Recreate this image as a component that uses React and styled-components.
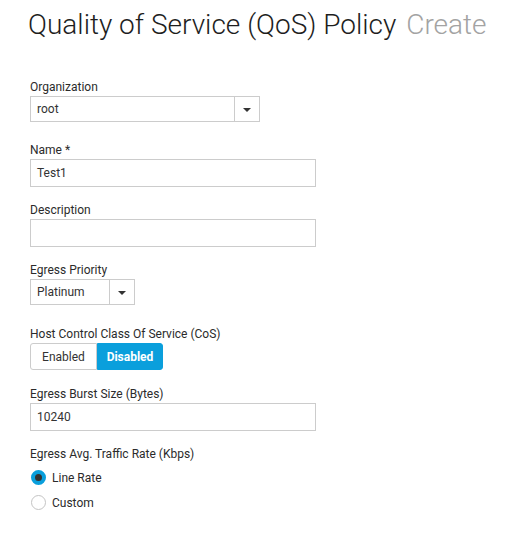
import React from "react";
import styled, { createGlobalStyle } from "styled-components";

const Global = createGlobalStyle`
  html, body { margin: 0; padding: 0; background: #fff; }
  body { font-family: Roboto, "Liberation Sans", Arial, sans-serif; color: #333; }
  * { box-sizing: border-box; }
`;

const Page = styled.div`
  width: 518px;
  height: 543px;
  padding: 8px 0 0 30px;
`;

const Title = styled.h1`
  margin: 0 0 0 -2px;
  font-weight: 300;
  font-size: 28px;
  line-height: 33px;
  color: #1e1e1e;
  white-space: nowrap;
`;

const Muted = styled.span`
  color: #a3a3a3;
  margin-left: 3px;
`;

const Form = styled.form`
  margin-top: 37px;
  display: flex;
  flex-direction: column;
`;

const Field = styled.div`
  display: flex;
  flex-direction: column;
  align-items: flex-start;
  margin-bottom: ${(p) => p.$mb ?? 14}px;
`;

const Label = styled.label`
  display: block;
  font-size: 12px;
  line-height: 17px;
  padding-top: 1px;
  color: #2b2b2b;
  margin-bottom: ${(p) => p.$gap ?? 0}px;
`;

const TextBox = styled.div`
  width: ${(p) => p.$w}px;
  height: ${(p) => p.$h ?? 28}px;
  border: 1px solid #cccccc;
  background: #fff;
  font-size: 12px;
  color: #333;
  padding: 0 6px;
  display: flex;
  align-items: center;
`;

const Select = styled.div`
  width: ${(p) => p.$w}px;
  height: 26px;
  border: 1px solid #cccccc;
  background: #fff;
  display: flex;
  font-size: 12px;
  color: #333;
`;

const SelectValue = styled.div`
  flex: 1;
  display: flex;
  align-items: center;
  padding: 0 6px;
`;

const SelectArrow = styled.div`
  width: 25px;
  border-left: 1px solid #cccccc;
  display: flex;
  align-items: center;
  justify-content: center;
  &::after {
    content: "";
    width: 0;
    height: 0;
    border-left: 4px solid transparent;
    border-right: 4px solid transparent;
    border-top: 4px solid #333;
    margin-top: 1px;
  }
`;

const Toggle = styled.div`
  display: flex;
  height: 27px;
`;

const ToggleBtn = styled.div`
  width: ${(p) => p.$w}px;
  display: flex;
  align-items: center;
  justify-content: center;
  font-size: 12px;
  font-weight: ${(p) => (p.$active ? 700 : 400)};
  color: ${(p) => (p.$active ? "#fff" : "#333")};
  background: ${(p) => (p.$active ? "#0a9fdc" : "#fff")};
  border: 1px solid ${(p) => (p.$active ? "#0a9fdc" : "#cccccc")};
  border-radius: ${(p) => (p.$first ? "3px 0 0 3px" : "0 3px 3px 0")};
`;

const RadioGroup = styled.div`
  display: flex;
  flex-direction: column;
  margin-top: 2px;
`;

const RadioRow = styled.div`
  height: 25px;
  display: flex;
  align-items: center;
  font-size: 12px;
  color: #2b2b2b;
`;

const RadioCircle = styled.span`
  width: 15px;
  height: 15px;
  margin-left: 1px;
  margin-right: 6px;
  border-radius: 50%;
  border: ${(p) => (p.$checked ? "4px solid #0a9fdc" : "1px solid #c4c4c4")};
  background: ${(p) => (p.$checked ? "#333" : "#fff")};
  flex: none;
`;

export default function App() {
  return (
    <>
      <Global />
      <Page>
        <Title>
          Quality of Service (QoS) Policy<Muted> Create</Muted>
        </Title>
        <Form>
          <Field $mb={19}>
            <Label>Organization</Label>
            <Select $w={230}>
              <SelectValue>root</SelectValue>
              <SelectArrow />
            </Select>
          </Field>
          <Field>
            <Label>Name *</Label>
            <TextBox $w={286}>Test1</TextBox>
          </Field>
          <Field>
            <Label>Description</Label>
            <TextBox $w={286} />
          </Field>
          <Field $mb={20}>
            <Label>Egress Priority</Label>
            <Select $w={105}>
              <SelectValue>Platinum</SelectValue>
              <SelectArrow />
            </Select>
          </Field>
          <Field $mb={15}>
            <Label>Host Control Class Of Service (CoS)</Label>
            <Toggle>
              <ToggleBtn $w={67} $first>Enabled</ToggleBtn>
              <ToggleBtn $w={66} $active>Disabled</ToggleBtn>
            </Toggle>
          </Field>
          <Field>
            <Label>Egress Burst Size (Bytes)</Label>
            <TextBox $w={286}>10240</TextBox>
          </Field>
          <Field $mb={0}>
            <Label>Egress Avg. Traffic Rate (Kbps)</Label>
            <RadioGroup>
              <RadioRow>
                <RadioCircle $checked />
                Line Rate
              </RadioRow>
              <RadioRow>
                <RadioCircle />
                Custom
              </RadioRow>
            </RadioGroup>
          </Field>
        </Form>
      </Page>
    </>
  );
}
